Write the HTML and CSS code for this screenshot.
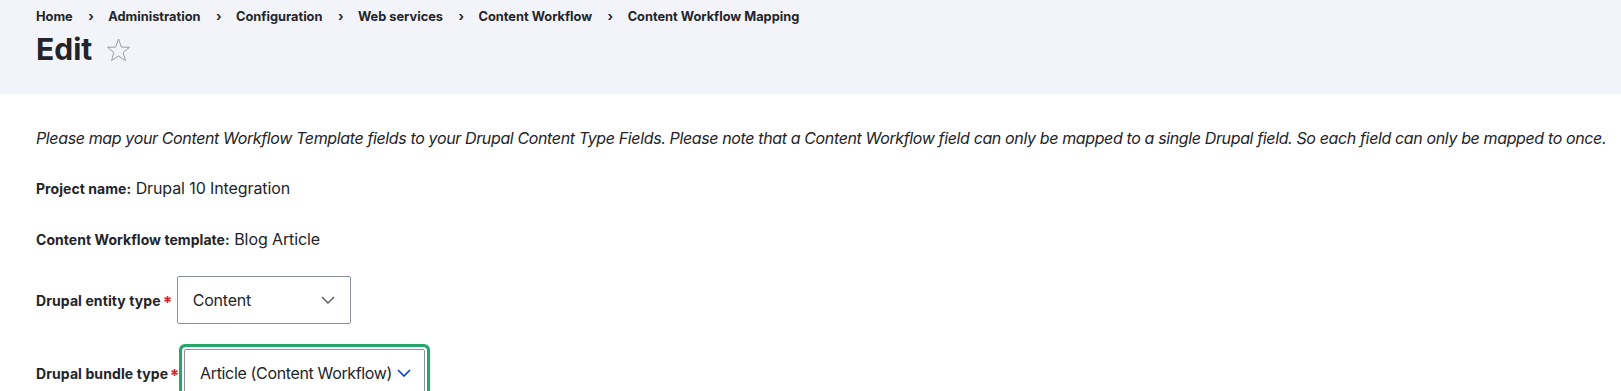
FILE: index.html
```html
<!DOCTYPE html>
<html lang="en">
<head>
<meta charset="utf-8">
<title>Edit</title>
<link rel="stylesheet" href="styles.css">
</head>
<body>
<header class="page-header">
  <nav class="breadcrumb">
    <a href="#">Home</a><span class="sep">›</span>
    <a href="#">Administration</a><span class="sep">›</span>
    <a href="#">Configuration</a><span class="sep">›</span>
    <a href="#">Web services</a><span class="sep">›</span>
    <a href="#">Content Workflow</a><span class="sep">›</span>
    <a href="#">Content Workflow Mapping</a>
  </nav>
  <div class="title-row">
    <h1 class="page-title">Edit</h1>
    <svg class="shortcut-star" width="25" height="24" viewBox="0 0 25 24" aria-hidden="true">
      <polygon points="12.5,1 15.4,9.1 23.6,9.3 17.2,14.4 19.4,22.6 12.5,17.9 5.6,22.6 7.8,14.4 1.4,9.3 9.6,9.1" fill="none" stroke="#9a9ca6" stroke-width="1" stroke-linejoin="round"/>
    </svg>
  </div>
</header>
<main class="content">
  <p class="intro">Please map your Content Workflow Template fields to your Drupal Content Type Fields. Please note that a Content Workflow field can only be mapped to a single Drupal field. So each field can only be mapped to once.</p>
  <div class="info-item"><strong>Project name:</strong> <span class="info-value">Drupal 10 Integration</span></div>
  <div class="info-item"><strong>Content Workflow template:</strong> <span class="info-value">Blog Article</span></div>
  <div class="form-item form-item-entity">
    <label class="form-label">Drupal entity type<svg class="required" width="7" height="7" viewBox="0 0 7 7" aria-hidden="true"><path d="M3.5 0v7M0.5 1.8l6 3.4M6.5 1.8l-6 3.4" stroke="#dc2323" stroke-width="1.6"/></svg></label>
    <div class="select select-entity">
      <span class="select-value">Content</span>
      <svg class="chevron" width="14" height="8" viewBox="0 0 14 8" aria-hidden="true"><path d="M1 1l6 6 6-6" fill="none" stroke="#55565b" stroke-width="1.4"/></svg>
    </div>
  </div>
  <div class="form-item form-item-bundle">
    <label class="form-label">Drupal bundle type<svg class="required" width="7" height="7" viewBox="0 0 7 7" aria-hidden="true"><path d="M3.5 0v7M0.5 1.8l6 3.4M6.5 1.8l-6 3.4" stroke="#dc2323" stroke-width="1.6"/></svg></label>
    <div class="select select-bundle is-focused">
      <span class="select-value">Article (Content Workflow)</span>
      <svg class="chevron" width="14" height="8" viewBox="0 0 14 8" aria-hidden="true"><path d="M1 1l6 6 6-6" fill="none" stroke="#003ecc" stroke-width="1.6"/></svg>
    </div>
  </div>
</main>
</body>
</html>
```

FILE: styles.css
```css
html, body {
  margin: 0;
  padding: 0;
  background: #ffffff;
}

body {
  font-family: Inter, "Noto Sans", "Liberation Sans", sans-serif;
  color: #232429;
  font-size: 16px;
  overflow: hidden;
}

.page-header {
  background: #f3f4f9;
  height: 94px;
  box-sizing: border-box;
  padding: 9px 36px 0 36px;
}

.breadcrumb {
  display: flex;
  align-items: center;
  font-size: 12.8px;
  line-height: 16px;
  font-weight: 700;
}

.breadcrumb a {
  color: #232429;
  text-decoration: none;
}

.breadcrumb .sep {
  margin: 0 14.5px 0 15.5px;
  font-weight: 700;
}

.title-row {
  display: flex;
  align-items: center;
  margin-top: 6px;
}

.page-title {
  margin: 0;
  font-size: 30px;
  line-height: 36px;
  font-weight: 700;
  letter-spacing: 0;
}

.shortcut-star {
  margin-left: 14px;
  margin-top: 1px;
}

.content {
  padding: 0 36px;
}

.intro {
  margin: 32px 0 0 0;
  font-style: italic;
  font-size: 16px;
  line-height: 24px;
  white-space: nowrap;
  letter-spacing: -0.37px;
}

.info-item {
  margin-top: 26px;
  line-height: 24px;
}

.info-item strong {
  font-size: 14px;
  font-weight: 700;
  letter-spacing: 0.05px;
}

.info-value {
  font-size: 16px;
  letter-spacing: -0.1px;
}

.form-item {
  display: flex;
  align-items: center;
}

.form-item-entity {
  margin-top: 24px;
}

.form-item-bundle {
  margin-top: 25px;
}

.form-label {
  font-size: 14px;
  font-weight: 700;
  letter-spacing: 0.1px;
  display: flex;
  align-items: center;
  white-space: nowrap;
}

.required {
  margin-left: 3px;
  margin-top: -2px;
}

.select {
  display: flex;
  align-items: center;
  justify-content: space-between;
  flex: none;
  box-sizing: border-box;
  height: 48px;
  margin-left: 6px;
  border: 1px solid #8e929c;
  border-radius: 2px;
  background: #ffffff;
  padding: 0 15px 0 15px;
}

.select-value {
  font-size: 16px;
  letter-spacing: -0.2px;
  white-space: nowrap;
}

.select-entity {
  width: 174px;
}

.select-bundle {
  width: 241px;
  justify-content: flex-start;
  gap: 5px;
}

.select-bundle .select-value {
  letter-spacing: -0.35px;
}

.select.is-focused {
  box-shadow: 0 0 0 2px #ffffff, 0 0 0 5px #26a769;
}

.chevron {
  flex: none;
}
```
